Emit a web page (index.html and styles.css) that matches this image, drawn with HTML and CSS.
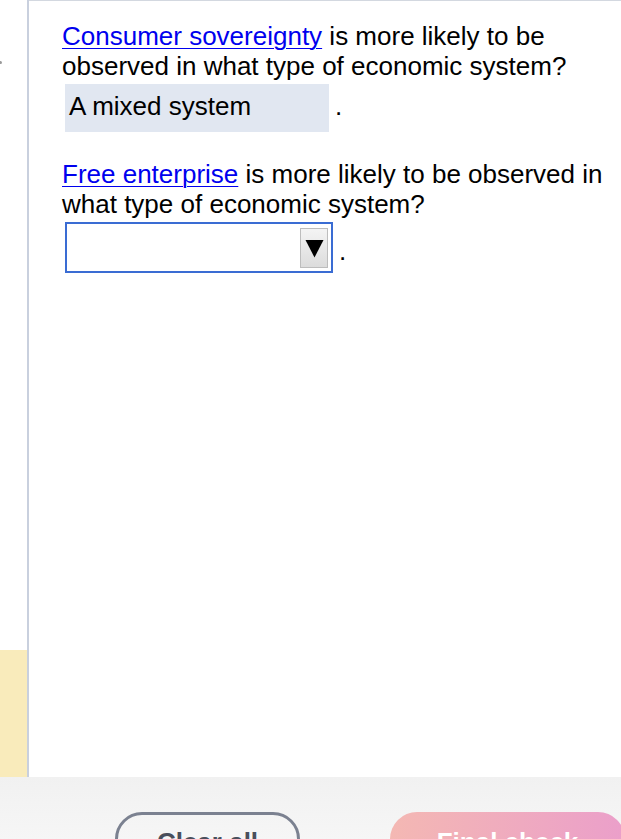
FILE: index.html
```html
<!DOCTYPE html>
<html lang="en">
<head>
<meta charset="utf-8">
<title>Economic systems</title>
<link rel="stylesheet" href="styles.css">
</head>
<body>
<div class="page">
  <aside class="side">
    <span class="side-dot"></span>
    <div class="side-note"></div>
  </aside>
  <main class="main">
    <p class="q">
      <a href="#" class="term">Consumer sovereignty</a> is more likely to be observed in what type of economic system?
    </p>
    <div class="answer-row">
      <span class="answer">A mixed system</span><span class="period">.</span>
    </div>
    <p class="q q2">
      <a href="#" class="term">Free enterprise</a> is more likely to be observed in what type of economic system?
    </p>
    <div class="answer-row">
      <span class="select"><span class="select-btn"><svg width="19" height="19" viewBox="0 0 19 19"><polygon points="0.5,1 18.5,1 9.5,18.5" fill="#000"/></svg></span></span><span class="period">.</span>
    </div>
  </main>
</div>
<footer class="footer">
  <button class="btn btn-clear">Clear all</button>
  <button class="btn btn-final">Final check</button>
</footer>
</body>
</html>
```

FILE: styles.css
```css
html, body {
  margin: 0;
  padding: 0;
  background: #ffffff;
  font-family: "Liberation Sans", Arial, sans-serif;
  overflow: hidden;
}
.page {
  display: flex;
  height: 777px;
}
.side {
  width: 27px;
  flex: none;
  border-right: 2px solid #c9d0de;
  display: flex;
  flex-direction: column;
  position: relative;
}
.side-dot {
  width: 3px;
  height: 3px;
  border-radius: 50%;
  background: #9a9a9a;
  margin-top: 61px;
  margin-left: -1px;
}
.side-note {
  margin-top: auto;
  height: 127px;
  background: #f9ebbb;
}
.main {
  flex: 1;
  border-top: 1px solid #d3d8e0;
  padding: 20px 10px 0 33px;
  font-size: 26px;
  line-height: 30px;
  color: #000;
}
.q {
  margin: 0;
}
.q2 {
  margin-top: 27px;
}
.term {
  color: #0000ee;
  text-decoration: underline;
  text-decoration-thickness: 1px;
  text-underline-offset: 3px;
}
.answer-row {
  display: flex;
  align-items: baseline;
  margin-top: 3px;
  margin-left: 3px;
}
.answer {
  display: inline-block;
  width: 256px;
  background: #e1e7f1;
  padding: 7px 4px 11px 4px;
  line-height: 30px;
}
.period {
  margin-left: 6px;
}
.select {
  display: flex;
  justify-content: flex-end;
  align-items: flex-start;
  box-sizing: border-box;
  width: 268px;
  height: 51px;
  border: 2px solid #3a6cd3;
  padding: 4px 3px 0 0;
  background: #fff;
}
.select-btn {
  box-sizing: border-box;
  width: 28px;
  height: 40px;
  border: 1px solid #bdbdbd;
  background: linear-gradient(#f4f4f4, #dcdcdc);
  display: flex;
  align-items: center;
  justify-content: center;
}
.select + .period {
  align-self: flex-start;
  margin-top: 14px;
}
.footer {
  height: 62px;
  background: linear-gradient(#f1f1f1, #f6f6f6);
  display: flex;
  align-items: flex-start;
  padding: 35px 0 0 115px;
  gap: 90px;
  box-sizing: border-box;
  overflow: hidden;
}
.btn {
  flex: none;
  height: 54px;
  border-radius: 27px;
  font-family: "Liberation Sans", Arial, sans-serif;
  font-size: 26px;
  font-weight: bold;
  padding: 12px 0 0;
  box-sizing: border-box;
  display: flex;
  justify-content: center;
  align-items: flex-start;
}
.btn-clear {
  width: 185px;
  border: 3px solid #7b8190;
  background: transparent;
  color: #4a4f5c;
}
.btn-final {
  width: 235px;
  border: none;
  padding-top: 15px;
  background: linear-gradient(90deg, #f4b8b3, #eb9fca);
  color: #ffffff;
}
```
